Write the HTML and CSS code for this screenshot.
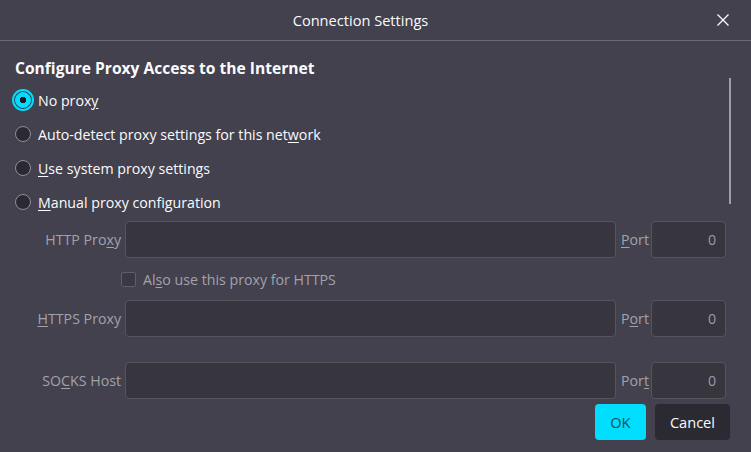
FILE: index.html
```html
<!DOCTYPE html>
<html lang="en">
<head>
<meta charset="utf-8">
<title>Connection Settings</title>
<link rel="stylesheet" href="styles.css">
</head>
<body>
<div class="dialog">
  <header class="titlebar">
    <span class="title">Connection Settings</span>
    <button class="close" aria-label="Close">
      <svg width="14" height="14" viewBox="0 0 14 14"><path d="M1.5 1.5 L12.5 12.5 M12.5 1.5 L1.5 12.5" stroke="#fbfbfe" stroke-width="1.3" fill="none"/></svg>
    </button>
  </header>
  <main class="content">
    <h1 class="heading">Configure Proxy Access to the Internet</h1>
    <div class="radios">
      <label class="radio-row"><span class="radio checked"></span><span>No prox<u>y</u></span></label>
      <label class="radio-row"><span class="radio"></span><span>Auto-detect proxy settings for this net<u>w</u>ork</span></label>
      <label class="radio-row"><span class="radio"></span><span><u>U</u>se system proxy settings</span></label>
      <label class="radio-row"><span class="radio"></span><span><u>M</u>anual proxy configuration</span></label>
    </div>
    <div class="proxy-grid">
      <span class="plabel">HTTP Pro<u>x</u>y</span>
      <span class="field"></span>
      <span class="portlabel"><u>P</u>ort</span>
      <span class="field port">0</span>

      <div class="check-row">
        <span class="checkbox"></span>
        <span class="checklabel">Al<u>s</u>o use this proxy for HTTPS</span>
      </div>

      <span class="plabel"><u>H</u>TTPS Proxy</span>
      <span class="field"></span>
      <span class="portlabel">P<u>o</u>rt</span>
      <span class="field port">0</span>

      <div class="spacer"></div>

      <span class="plabel">SO<u>C</u>KS Host</span>
      <span class="field"></span>
      <span class="portlabel">Por<u>t</u></span>
      <span class="field port">0</span>
    </div>
    <div class="scrollbar"></div>
  </main>
  <footer class="footer">
    <button class="btn primary">OK</button>
    <button class="btn">Cancel</button>
  </footer>
</div>
</body>
</html>
```
FILE: styles.css
```css
* { box-sizing: border-box; }
html, body {
  margin: 0;
  padding: 0;
  width: 751px;
  height: 452px;
  overflow: hidden;
  background: #42414d;
}
body {
  font-family: "Open Sans", "Noto Sans", sans-serif;
  font-size: 14.2px;
  color: #fbfbfe;
}
u { text-decoration-thickness: 1px; text-underline-offset: 2px; }
.dialog {
  display: flex;
  flex-direction: column;
  height: 452px;
}
.titlebar {
  position: relative;
  height: 41px;
  border-bottom: 1px solid #6b6a75;
  display: flex;
  align-items: center;
  justify-content: center;
  padding-right: 30px;
}
.title {
  font-size: 14.6px;
  color: #fbfbfe;
}
.close {
  position: absolute;
  right: 21px;
  top: 13px;
  width: 14px;
  height: 14px;
  padding: 0;
  border: 0;
  background: none;
  display: flex;
}
.content {
  position: relative;
  padding: 16px 0 0 15px;
}
.heading {
  margin: 0;
  font-size: 15.6px;
  font-weight: 700;
  line-height: 22px;
  height: 22px;
}
.radios {
  margin-top: 4px;
  display: flex;
  flex-direction: column;
}
.radio-row {
  height: 34px;
  display: flex;
  align-items: center;
  gap: 7px;
}
.radio {
  width: 16px;
  height: 16px;
  border-radius: 50%;
  background: #2b2a33;
  border: 1px solid #8f8f9d;
  flex: none;
}
.radio.checked {
  background: #00ddff radial-gradient(circle, #1c1b22 0 3px, transparent 3.5px);
  border-color: #00ddff;
  outline: 2px solid #00ddff;
  outline-offset: 1px;
}
.proxy-grid {
  margin: 2px 0 0 -15px;
  display: grid;
  grid-template-columns: 121px 491px 27px 75px;
  grid-template-rows: 37px 42px 37px 25px 37px;
  column-gap: 4px;
  align-items: center;
  color: #a3a2ab;
}
.plabel {
  text-align: right;
}
.portlabel {
  text-align: left;
  margin-left: 1px;
}
.field {
  height: 37px;
  background: #37363f;
  border: 1px solid #56555f;
  border-radius: 4px;
}
.field.port {
  text-align: right;
  padding-right: 9px;
  line-height: 35px;
  color: #9c9ba4;
}
.check-row {
  grid-column: 1 / -1;
  display: flex;
  align-items: center;
  padding-left: 121px;
  gap: 7px;
  padding-top: 1px;
}
.checkbox {
  width: 15px;
  height: 15px;
  border: 1px solid #5e5d68;
  background: #3a3943;
  border-radius: 2px;
}
.spacer {
  grid-column: 1 / -1;
}
.scrollbar {
  position: absolute;
  right: 20px;
  top: 37px;
  width: 2px;
  height: 126px;
  background: #a09fa8;
}
.footer {
  margin-top: 5px;
  display: flex;
  justify-content: flex-end;
  gap: 9px;
  padding-right: 21px;
}
.btn {
  height: 36px;
  padding: 0 15px;
  border: 0;
  border-radius: 4px;
  background: #2b2a33;
  color: #fbfbfe;
  font-family: "Open Sans", "Noto Sans", sans-serif;
  font-size: 14.6px;
}
.btn.primary {
  background: #00ddff;
  color: #15525d;
  width: 51px;
  padding: 0;
}
```
